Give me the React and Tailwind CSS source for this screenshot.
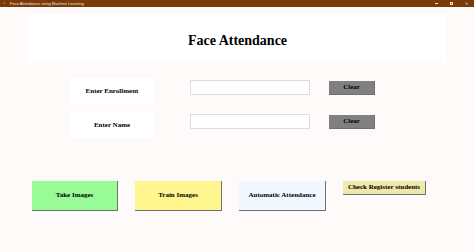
const serif = { fontFamily: '"Liberation Serif", "Times New Roman", serif' };

function RaisedButton({ label, className }) {
  return (
    <button
      className={`flex items-center justify-center border-b border-r border-[#6f6f6f] text-[7px] font-bold text-black ${className}`}
    >
      {label}
    </button>
  );
}

function FieldRow({ label, className }) {
  return (
    <div className={`flex items-start ${className}`}>
      <div className="ml-[70px] flex h-[26px] w-[84px] items-center justify-center bg-white text-[7px] font-bold text-black">
        {label}
      </div>
      <input className="ml-[36px] mt-[2px] h-[15px] w-[120px] border border-[#dcdcdc] bg-white outline-none" />
      <RaisedButton label="Clear" className="ml-[19px] mt-[3px] h-[14px] w-[46px] bg-[#808080]" />
    </div>
  );
}

export default function App() {
  return (
    <div className="flex h-[252px] w-[474px] flex-col overflow-hidden bg-[#fffafa]" style={serif}>
      {/* window title bar */}
      <div className="flex h-[7px] items-center bg-[#7a3a0a] pl-[3px] pr-[6px] text-[#f3e6dc]">
        <span className="text-[3px] leading-none">✎</span>
        <span className="ml-[4px] text-[4px] leading-none" style={{ fontFamily: '"Liberation Sans", Arial, sans-serif' }}>
          Face Attendance using Machine Learning
        </span>
        <div className="ml-auto flex items-center gap-[12px] text-[4px] leading-none">
          <span className="block h-px w-[3px] bg-[#f3e6dc]" />
          <span className="block h-[3px] w-[3px] border border-[#f3e6dc]" />
          <span>✕</span>
        </div>
      </div>

      <div className="ml-[28px] mt-[7px] flex h-[49px] w-[419px] items-center justify-center bg-white pt-[3px]">
        <h1 className="text-[14px] font-bold text-black">Face Attendance</h1>
      </div>

      <FieldRow label="Enter Enrollment" className="mt-[15px]" />
      <FieldRow label="Enter Name" className="mt-[8px]" />

      <div className="mt-[43px] flex items-start">
        <RaisedButton label="Take Images" className="ml-[32px] h-[30px] w-[86px] bg-[#98fb98]" />
        <RaisedButton label="Train Images" className="ml-[17px] h-[30px] w-[87px] bg-[#fff68f]" />
        <RaisedButton label="Automatic Attendance" className="ml-[17px] h-[30px] w-[87px] bg-[#f0f8ff]" />
        <RaisedButton label="Check Register students" className="ml-[17px] h-[14px] w-[83px] bg-[#eee8aa]" />
      </div>
    </div>
  );
}
